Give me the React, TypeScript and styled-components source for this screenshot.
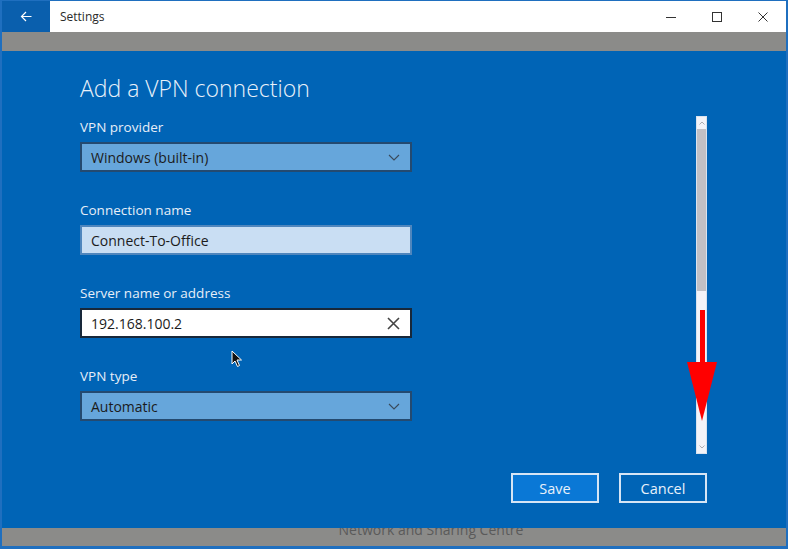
import styled, { createGlobalStyle } from "styled-components";

const GlobalStyle = createGlobalStyle`
  html, body {
    margin: 0;
    padding: 0;
    background: #1f6fbf;
  }
  * {
    box-sizing: border-box;
  }
`;

const Frame = styled.div`
  width: 788px;
  height: 549px;
  padding: 1px 2px 3px 2px;
  background: #1f6fbf;
  font-family: "Open Sans", "Noto Sans", sans-serif;
  position: relative;
  overflow: hidden;
`;

const Window = styled.div`
  display: flex;
  flex-direction: column;
  height: 100%;
  background: #0064b6;
`;

const TitleBar = styled.div`
  display: flex;
  align-items: center;
  height: 31px;
  background: #ffffff;
  flex-shrink: 0;
`;

const BackButton = styled.div`
  width: 48px;
  height: 100%;
  background: #0a5fad;
  display: flex;
  align-items: center;
  justify-content: center;
`;

const WindowTitle = styled.div`
  flex: 1;
  padding-left: 10px;
  font-size: 12px;
  color: #2b2b2b;
`;

const ControlButton = styled.div`
  width: 46px;
  height: 100%;
  display: flex;
  align-items: center;
  justify-content: center;
`;

const Band = styled.div<{ $height: number }>`
  height: ${(p) => p.$height}px;
  flex-shrink: 0;
  background: #8b8b89;
  overflow: hidden;
  display: flex;
  justify-content: center;
  padding-left: 74px;
`;

const BandText = styled.span`
  font-size: 14px;
  line-height: 20px;
  margin-top: -8px;
  color: #5a5a5a;
`;

const Dialog = styled.div`
  flex: 1;
  display: flex;
  flex-direction: column;
  background: #0064b6;
  position: relative;
`;

const Body = styled.div`
  display: flex;
  padding: 0 79px 0 78px;
`;

const Form = styled.div`
  flex: 1;
  padding-top: 22px;
  display: flex;
  flex-direction: column;
`;

const Heading = styled.h1`
  margin: 0 0 14px;
  font-size: 23px;
  line-height: 30px;
  font-weight: 300;
  color: #e9f1fa;
`;

const Field = styled.div`
  display: flex;
  flex-direction: column;
  margin-bottom: 28px;
`;

const Label = styled.div`
  font-size: 13.5px;
  line-height: 20px;
  margin-bottom: 5px;
  color: #e6eef8;
`;

const Box = styled.div<{ $variant: "select" | "filled" | "input" }>`
  width: 332px;
  height: 30px;
  display: flex;
  align-items: center;
  justify-content: space-between;
  padding: 0 10px 0 9px;
  font-size: 14px;
  color: #1b1b1b;
  border: 2px solid
    ${(p) =>
      p.$variant === "select" ? "#244a70" : p.$variant === "filled" ? "#4f86bd" : "#18283a"};
  background: ${(p) =>
    p.$variant === "select" ? "#66a6db" : p.$variant === "filled" ? "#c9def3" : "#ffffff"};
`;

const ScrollRail = styled.div`
  width: 11px;
  height: 338px;
  margin-top: 65px;
  display: flex;
  flex-direction: column;
  background: #f3f3f8;
  border: 1px solid #d9e3ef;
`;

const RailArrow = styled.div`
  height: 12px;
  display: flex;
  align-items: center;
  justify-content: center;
  flex-shrink: 0;
`;

const Thumb = styled.div`
  height: 162px;
  background: #c1c0c5;
`;

const RailTrack = styled.div`
  flex: 1;
`;

const Footer = styled.div`
  margin-top: auto;
  display: flex;
  justify-content: flex-end;
  gap: 20px;
  padding: 0 79px 25px 0;
`;

const Button = styled.div<{ $primary?: boolean }>`
  width: 88px;
  height: 30px;
  display: flex;
  align-items: center;
  justify-content: center;
  font-size: 14.5px;
  color: #e8f1fb;
  border: 2px solid #d6e5f5;
  background: ${(p) => (p.$primary ? "#0a78d6" : "transparent")};
`;

const Overlay = styled.div<{ $x: number; $y: number }>`
  position: absolute;
  left: ${(p) => p.$x}px;
  top: ${(p) => p.$y}px;
  pointer-events: none;
`;

const Chevron = () => (
  <svg width="12" height="7" viewBox="0 0 12 7">
    <path d="M1 1 L6 6 L11 1" fill="none" stroke="#3a4a5a" strokeWidth="1.1" />
  </svg>
);

const App = () => {
  return (
    <>
      <GlobalStyle />
      <Frame>
        <Window>
          <TitleBar>
            <BackButton>
              <svg width="12" height="11" viewBox="0 0 12 11">
                <path d="M11.5 5.5 H1.5 M6 1 L1.5 5.5 L6 10" fill="none" stroke="#ffffff" strokeWidth="1.2" />
              </svg>
            </BackButton>
            <WindowTitle>Settings</WindowTitle>
            <ControlButton>
              <svg width="10" height="10" viewBox="0 0 10 10">
                <path d="M0 5.5 H10" stroke="#333" strokeWidth="1" />
              </svg>
            </ControlButton>
            <ControlButton>
              <svg width="10" height="10" viewBox="0 0 10 10">
                <rect x="0.5" y="0.5" width="9" height="9" fill="none" stroke="#333" strokeWidth="1" />
              </svg>
            </ControlButton>
            <ControlButton>
              <svg width="10" height="10" viewBox="0 0 10 10">
                <path d="M0.5 0.5 L9.5 9.5 M9.5 0.5 L0.5 9.5" stroke="#333" strokeWidth="1" />
              </svg>
            </ControlButton>
          </TitleBar>
          <Band $height={19} />
          <Dialog>
            <Body>
              <Form>
                <Heading>Add a VPN connection</Heading>
                <Field>
                  <Label>VPN provider</Label>
                  <Box $variant="select">
                    <span>Windows (built-in)</span>
                    <Chevron />
                  </Box>
                </Field>
                <Field>
                  <Label>Connection name</Label>
                  <Box $variant="filled">
                    <span>Connect-To-Office</span>
                  </Box>
                </Field>
                <Field>
                  <Label>Server name or address</Label>
                  <Box $variant="input">
                    <span>192.168.100.2</span>
                    <svg width="13" height="13" viewBox="0 0 13 13">
                      <path d="M1 1 L12 12 M12 1 L1 12" stroke="#444" strokeWidth="1.6" />
                    </svg>
                  </Box>
                </Field>
                <Field>
                  <Label>VPN type</Label>
                  <Box $variant="select">
                    <span>Automatic</span>
                    <Chevron />
                  </Box>
                </Field>
              </Form>
              <ScrollRail>
                <RailArrow>
                  <svg width="6" height="4" viewBox="0 0 6 4">
                    <path d="M0.5 3.5 L3 1 L5.5 3.5" fill="none" stroke="#9a9aa0" strokeWidth="0.8" />
                  </svg>
                </RailArrow>
                <Thumb />
                <RailTrack />
                <RailArrow>
                  <svg width="6" height="4" viewBox="0 0 6 4">
                    <path d="M0.5 0.5 L3 3 L5.5 0.5" fill="none" stroke="#9a9aa0" strokeWidth="0.8" />
                  </svg>
                </RailArrow>
              </ScrollRail>
            </Body>
            <Footer>
              <Button $primary>Save</Button>
              <Button>Cancel</Button>
            </Footer>
            <Overlay $x={684} $y={259}>
              <svg width="32" height="112" viewBox="0 0 32 112">
                <rect x="14" y="0" width="5" height="55" fill="#ff0000" />
                <polygon points="1,52 31,52 16,111" fill="#ff0000" />
              </svg>
            </Overlay>
            <Overlay $x={229} $y={299}>
              <svg width="12" height="18" viewBox="0 0 12 18">
                <path
                  d="M1 1 L1 14 L4 11 L6.5 16.5 L8.5 15.5 L6 10 L10.5 10 Z"
                  fill="#111"
                  stroke="#fff"
                  strokeWidth="1"
                  strokeLinejoin="round"
                />
              </svg>
            </Overlay>
          </Dialog>
          <Band $height={18}>
            <BandText>Network and Sharing Centre</BandText>
          </Band>
        </Window>
      </Frame>
    </>
  );
};

export default App;
